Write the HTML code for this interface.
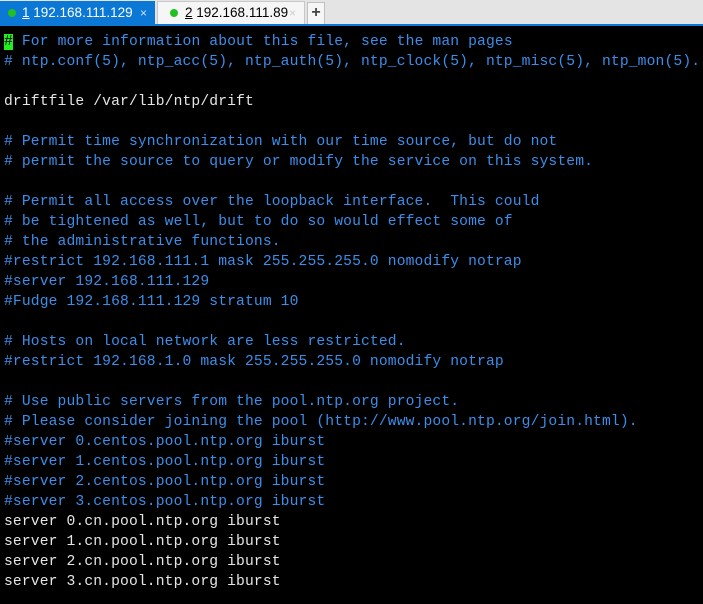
<!DOCTYPE html>
<html><head><style>
body{margin:0;width:703px;height:604px;overflow:hidden;background:#000;font-family:"Liberation Sans",sans-serif}
#bar{position:absolute;left:0;top:0;width:703px;height:24px;background:#e4e4e4}
#line{position:absolute;left:0;top:24px;width:703px;height:2px;background:#0a78d4}
.tab{position:absolute;top:1px;height:23px;font-size:13.5px;line-height:24px;box-sizing:border-box}
.t1{left:0;width:155px;background:#0a78d4;color:#fff}
.t2{left:157px;width:148px;background:#f6f6f6;color:#000;border:1px solid #c8c8c8;border-bottom:none}
.dot{position:absolute;left:8px;top:8px;width:8px;height:8px;border-radius:50%;background:#22c022}
.x{position:absolute;right:8px;top:0;font-size:12px;color:#ccc}
.t1 .x{color:#cfe3f7}
.plus{position:absolute;left:307px;top:2px;width:18px;height:22px;background:#f6f6f6;border:1px solid #c0c0c0;border-bottom:none;box-sizing:border-box;text-align:center;font:bold 16px/20px "Liberation Sans",sans-serif;color:#444}
pre{position:absolute;left:4px;top:32px;margin:0;font:14.67px/20px "Liberation Mono",monospace;letter-spacing:0.13px;color:#e6e6e6}
.b{color:#3b8eea}
.c{background:#22ee22;color:#000}
</style></head><body>
<div id="bar"></div><div id="line"></div>
<div class="tab t1"><span class="dot"></span><span style="position:absolute;left:22px"><u>1</u> 192.168.111.129</span><span class="x">×</span></div>
<div class="tab t2"><span class="dot" style="left:12px;top:7px"></span><span style="position:absolute;left:27px;top:-1px"><u>2</u> 192.168.111.89</span><span class="x" style="top:-1px">×</span></div>
<div class="plus">+</div>
<pre><span class="b"><span class="c">#</span> For more information about this file, see the man pages
# ntp.conf(5), ntp_acc(5), ntp_auth(5), ntp_clock(5), ntp_misc(5), ntp_mon(5).</span>

driftfile /var/lib/ntp/drift
<span class="b">
# Permit time synchronization with our time source, but do not
# permit the source to query or modify the service on this system.

# Permit all access over the loopback interface.  This could
# be tightened as well, but to do so would effect some of
# the administrative functions.
#restrict 192.168.111.1 mask 255.255.255.0 nomodify notrap
#server 192.168.111.129
#Fudge 192.168.111.129 stratum 10

# Hosts on local network are less restricted.
#restrict 192.168.1.0 mask 255.255.255.0 nomodify notrap

# Use public servers from the pool.ntp.org project.
# Please consider joining the pool (http://www.pool.ntp.org/join.html).
#server 0.centos.pool.ntp.org iburst
#server 1.centos.pool.ntp.org iburst
#server 2.centos.pool.ntp.org iburst
#server 3.centos.pool.ntp.org iburst</span>
server 0.cn.pool.ntp.org iburst
server 1.cn.pool.ntp.org iburst
server 2.cn.pool.ntp.org iburst
server 3.cn.pool.ntp.org iburst</pre>
</body></html>
